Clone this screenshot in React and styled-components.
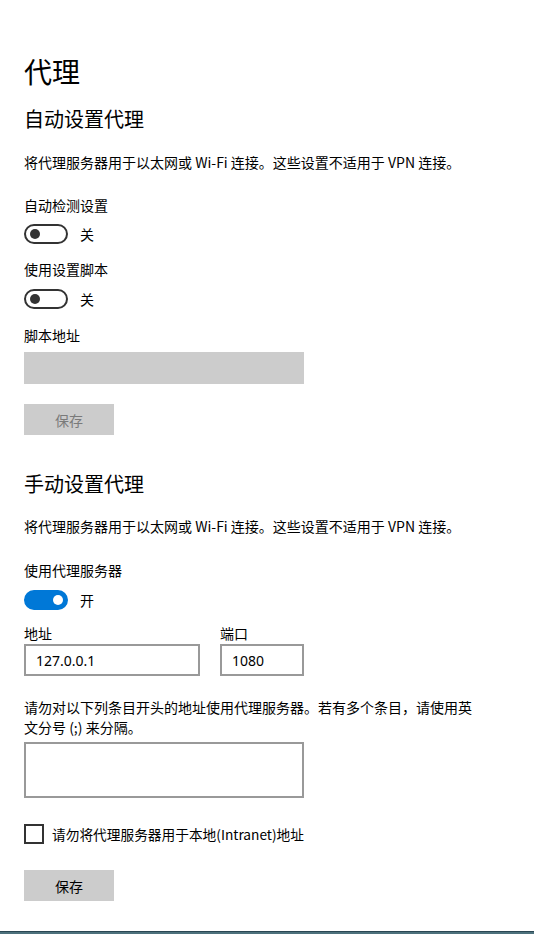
import React, { useState } from "react";
import styled, { createGlobalStyle } from "styled-components";

const GlobalStyle = createGlobalStyle`
  html, body {
    margin: 0;
    padding: 0;
    background: #ffffff;
  }
  body {
    font-family: "Noto Sans", "Noto Sans CJK SC", sans-serif;
    color: #000000;
  }
`;

const Page = styled.div`
  display: flex;
  flex-direction: column;
  height: 934px;
  box-sizing: border-box;
  overflow: hidden;
`;

const Content = styled.main`
  flex: 1;
  display: flex;
  flex-direction: column;
  align-items: flex-start;
  padding: 51px 0 0 24px;
  font-family: "Noto Sans CJK SC", "Noto Sans", sans-serif;
`;

const Title = styled.h1`
  margin: 0;
  font-size: 28px;
  line-height: 40px;
  font-weight: 400;
`;

const SectionTitle = styled.h2`
  margin: ${(p) => p.$top}px 0 0;
  font-size: 20px;
  line-height: 28px;
  font-weight: 400;
`;

const Text = styled.p`
  margin: ${(p) => p.$top}px 0 0;
  font-size: 14px;
  line-height: 20px;
  max-width: ${(p) => (p.$wrap ? "460px" : "none")};
  white-space: ${(p) => (p.$wrap ? "normal" : "nowrap")};
`;

const ToggleRow = styled.label`
  display: flex;
  align-items: center;
  gap: 12px;
  margin-top: ${(p) => p.$top}px;
  font-size: 14px;
  height: 20px;
  cursor: pointer;
`;

const Track = styled.span`
  position: relative;
  box-sizing: border-box;
  width: 44px;
  height: 20px;
  border-radius: 10px;
  border: 2px solid ${(p) => (p.$on ? "#0078d7" : "#333333")};
  background: ${(p) => (p.$on ? "#0078d7" : "#ffffff")};
`;

const Knob = styled.span`
  position: absolute;
  top: 3px;
  left: ${(p) => (p.$on ? "27px" : "4px")};
  width: 10px;
  height: 10px;
  border-radius: 50%;
  background: ${(p) => (p.$on ? "#ffffff" : "#333333")};
`;

const DisabledField = styled.div`
  margin-top: ${(p) => p.$top}px;
  width: 280px;
  height: 32px;
  background: #cccccc;
`;

const Button = styled.button`
  margin-top: ${(p) => p.$top}px;
  width: 90px;
  height: 31px;
  border: none;
  padding: 0;
  background: #cccccc;
  color: ${(p) => (p.disabled ? "#7a7a7a" : "#000000")};
  font-family: "Noto Sans CJK SC", sans-serif;
  font-size: 14px;
`;

const FieldGrid = styled.div`
  display: grid;
  grid-template-columns: 176px 84px;
  column-gap: 20px;
  row-gap: 1px;
  margin-top: 13px;
  font-size: 14px;
  line-height: 20px;
`;

const Input = styled.input`
  box-sizing: border-box;
  width: 100%;
  height: 32px;
  border: 2px solid #999999;
  padding: 0 10px;
  font-family: "Noto Sans", sans-serif;
  font-size: 14px;
  color: #000000;
  outline: none;
`;

const TextArea = styled.textarea`
  box-sizing: border-box;
  margin-top: 5px;
  width: 280px;
  height: 56px;
  border: 2px solid #999999;
  resize: none;
  outline: none;
`;

const CheckRow = styled.label`
  display: flex;
  align-items: center;
  gap: 8px;
  margin-top: 26px;
  font-size: 13.7px;
`;

const Box = styled.span`
  box-sizing: border-box;
  width: 20px;
  height: 20px;
  border: 2px solid #333333;
  background: #ffffff;
`;

const BottomBar = styled.div`
  height: 3px;
  background: linear-gradient(#2a4753 0 1px, #4d717c 1px);
`;

function Toggle({ on, label, top, onChange }) {
  return (
    <ToggleRow $top={top} onClick={onChange}>
      <Track $on={on}>
        <Knob $on={on} />
      </Track>
      {label}
    </ToggleRow>
  );
}

export default function App() {
  const [autoDetect, setAutoDetect] = useState(false);
  const [useScript, setUseScript] = useState(false);
  const [useProxy, setUseProxy] = useState(true);
  const [bypassLocal, setBypassLocal] = useState(false);

  const desc = "将代理服务器用于以太网或 Wi-Fi 连接。这些设置不适用于 VPN 连接。";

  return (
    <Page>
      <GlobalStyle />
      <Content>
        <Title>代理</Title>

        <SectionTitle $top={14}>自动设置代理</SectionTitle>
        <Text $top={19}>{desc}</Text>

        <Text $top={23}>自动检测设置</Text>
        <Toggle top={9} on={autoDetect} label={autoDetect ? "开" : "关"} onChange={() => setAutoDetect(!autoDetect)} />

        <Text $top={15}>使用设置脚本</Text>
        <Toggle top={10} on={useScript} label={useScript ? "开" : "关"} onChange={() => setUseScript(!useScript)} />

        <Text $top={16}>脚本地址</Text>
        <DisabledField $top={7} />
        <Button $top={20} disabled>保存</Button>

        <SectionTitle $top={35}>手动设置代理</SectionTitle>
        <Text $top={18}>{desc}</Text>

        <Text $top={24}>使用代理服务器</Text>
        <Toggle top={10} on={useProxy} label={useProxy ? "开" : "关"} onChange={() => setUseProxy(!useProxy)} />

        <FieldGrid>
          <span>地址</span>
          <span>端口</span>
          <Input defaultValue="127.0.0.1" />
          <Input defaultValue="1080" />
        </FieldGrid>

        <Text $top={21} $wrap>
          请勿对以下列条目开头的地址使用代理服务器。若有多个条目，请使用英文分号 (;) 来分隔。
        </Text>
        <TextArea />

        <CheckRow onClick={() => setBypassLocal(!bypassLocal)}>
          <Box>{bypassLocal ? "✓" : null}</Box>
          请勿将代理服务器用于本地(Intranet)地址
        </CheckRow>

        <Button $top={26}>保存</Button>
      </Content>
      <BottomBar />
    </Page>
  );
}
